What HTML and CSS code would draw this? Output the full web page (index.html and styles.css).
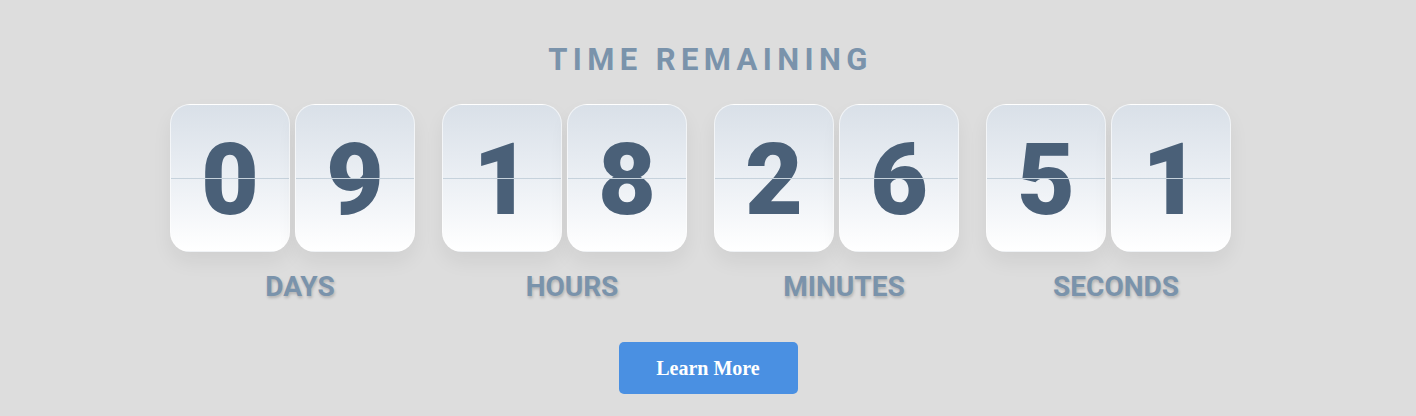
FILE: index.html
```html
<!DOCTYPE html>
<html lang="en">
<head>
    <meta charset="UTF-8">
    <meta name="viewport" content="width=device-width, initial-scale=1.0">
    <title>Countdown</title>
    <link rel="stylesheet" href="styles.css">
</head>
<body>
    <div class="countdown">
        <h1 class="title">Time Remaining</h1>

        <div class="units">
            <div class="unit">
                <div class="cards">
                    <div class="card">0</div>
                    <div class="card">9</div>
                </div>
                <div class="label">Days</div>
            </div>
            <div class="unit">
                <div class="cards">
                    <div class="card">1</div>
                    <div class="card">8</div>
                </div>
                <div class="label">Hours</div>
            </div>
            <div class="unit">
                <div class="cards">
                    <div class="card">2</div>
                    <div class="card">6</div>
                </div>
                <div class="label">Minutes</div>
            </div>
            <div class="unit">
                <div class="cards">
                    <div class="card">5</div>
                    <div class="card">1</div>
                </div>
                <div class="label">Seconds</div>
            </div>
        </div>

        <button class="learn-more">Learn More</button>
    </div>
</body>
</html>
```
FILE: styles.css
```css
body {
    margin: 0;
    padding: 0;
    background: #dddddd;
    font-family: 'Roboto', 'Liberation Sans', sans-serif;
}
.countdown {
    display: flex;
    flex-direction: column;
    align-items: center;
    padding-top: 40px;
}
.title {
    margin: 0;
    font-size: 31px;
    font-weight: 700;
    letter-spacing: 5.4px;
    text-transform: uppercase;
    color: #7a93ab;
    line-height: 40px;
    padding-left: 5px;
}
.units {
    display: flex;
    gap: 12px;
    margin-top: 24px;
}
.unit {
    display: flex;
    flex-direction: column;
    align-items: center;
    width: 260px;
}
.cards {
    display: flex;
    gap: 5px;
    width: 260px;
    padding-right: 15px;
    box-sizing: border-box;
}
.card {
    position: relative;
    width: 120px;
    height: 148px;
    box-sizing: border-box;
    border: 1px solid rgba(255, 255, 255, 0.6);
    border-radius: 20px;
    background: linear-gradient(to bottom, #d9e0e8, #ebeff4 50%, #ffffff);
    box-shadow: 0 10px 20px rgba(0, 0, 0, 0.06);
    display: flex;
    justify-content: center;
    align-items: center;
    padding-top: 3px;
    font-size: 100px;
    font-weight: 900;
    color: #4a6078;
    line-height: 1;
}
.card::after {
    content: "";
    position: absolute;
    left: 0;
    right: 0;
    top: 50%;
    height: 1px;
    background: #c6d2dc;
}
.label {
    margin-top: 18px;
    font-size: 28px;
    font-weight: 700;
    text-transform: uppercase;
    color: #7a93ab;
    text-shadow: 1px 2px 3px rgba(0, 0, 0, 0.2);
    line-height: 34px;
}
.learn-more {
    margin-top: 38px;
    width: 179px;
    height: 52px;
    background: #4a90e2;
    color: white;
    border: none;
    border-radius: 5px;
    font-family: 'Liberation Serif', serif;
    font-size: 20px;
    font-weight: bold;
    cursor: pointer;
}
```
